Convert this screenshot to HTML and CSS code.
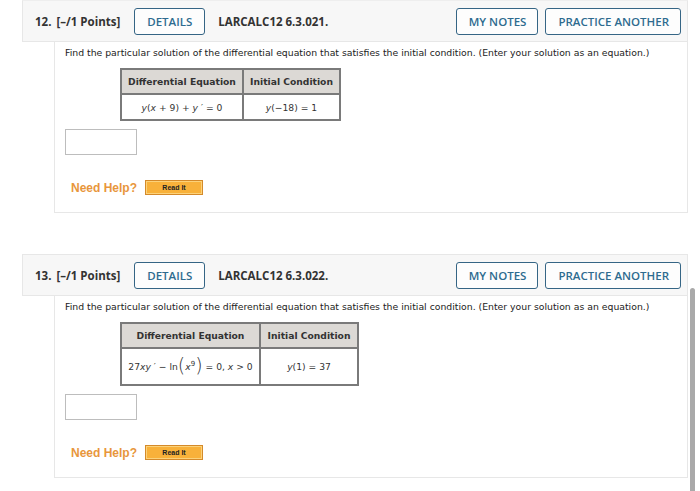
FILE: index.html
```html
<!DOCTYPE html>
<html>
<head>
<meta charset="utf-8">
<link rel="stylesheet" href="styles.css">
</head>
<body>
<div class="page">
  <section class="card card-first">
    <header class="card-head">
      <span class="qnum">12.</span>
      <span class="points">[–/1 Points]</span>
      <span class="btn">DETAILS</span>
      <span class="code">LARCALC12 6.3.021.</span>
      <span class="spacer"></span>
      <span class="btn">MY NOTES</span>
      <span class="btn">PRACTICE ANOTHER</span>
    </header>
    <div class="card-body body-one">
      <p class="prompt">Find the particular solution of the differential equation that satisfies the initial condition. (Enter your solution as an equation.)</p>
      <table class="eq-table t1">
        <tr><th class="c1">Differential Equation</th><th>Initial Condition</th></tr>
        <tr><td class="c1"><i>y</i>(<i>x</i> + 9) + <i>y</i> ′ = 0</td><td><i>y</i>(−18) = 1</td></tr>
      </table>
      <div class="answer"></div>
      <div class="help"><span class="need">Need Help?</span><span class="readit">Read It</span></div>
    </div>
  </section>

  <section class="card card-second">
    <header class="card-head">
      <span class="qnum">13.</span>
      <span class="points">[–/1 Points]</span>
      <span class="btn">DETAILS</span>
      <span class="code">LARCALC12 6.3.022.</span>
      <span class="spacer"></span>
      <span class="btn">MY NOTES</span>
      <span class="btn">PRACTICE ANOTHER</span>
    </header>
    <div class="card-body body-two">
      <p class="prompt">Find the particular solution of the differential equation that satisfies the initial condition. (Enter your solution as an equation.)</p>
      <table class="eq-table t2">
        <tr><th class="c1">Differential Equation</th><th>Initial Condition</th></tr>
        <tr><td class="c1">27<i>xy</i> ′ − ln<span class="paren">(</span><i>x</i><sup>9</sup><span class="paren">)</span> = 0, <i>x</i> &gt; 0</td><td><i>y</i>(1) = 37</td></tr>
      </table>
      <div class="answer"></div>
      <div class="help"><span class="need">Need Help?</span><span class="readit">Read It</span></div>
    </div>
  </section>
</div>
<div class="scrollthumb"></div>
</body>
</html>
```

FILE: styles.css
```css
html, body {
  margin: 0;
  padding: 0;
  background: #ffffff;
}
body {
  width: 700px;
  height: 491px;
  overflow: hidden;
  position: relative;
}
.page {
  padding-left: 22px;
  width: 666px;
}
.card-second { margin-top: 41px; }

.card-head {
  box-sizing: border-box;
  height: 42px;
  background: #f7f7f7;
  border: 1px solid #e7e7e7;
  display: flex;
  align-items: center;
  padding-left: 12px;
  padding-right: 6px;
  font-family: "Open Sans", sans-serif;
  font-weight: 700;
  font-size: 11.5px;
  color: #333;
}
.card-first .card-head { border-top-color: #eeeeee; }
.qnum { margin-right: 5px; }
.points { margin-right: 14px; }
.code { margin-left: 13px; font-weight: 700; }
.spacer { flex: 1; }
.btn {
  box-sizing: border-box;
  height: 27px;
  display: inline-flex;
  align-items: center;
  padding: 0 11px 0 12px;
  border: 1.5px solid #356585;
  border-radius: 3px;
  background: #fdfdfd;
  color: #2e6b8f;
  font-weight: 600;
  font-size: 11.5px;
  margin-left: 7px;
}
.points + .btn { margin-left: 0; padding: 0 12px; }
.card-body {
  box-sizing: border-box;
  margin-left: 32px;
  border: 1px solid #e7e7e7;
  border-top: none;
  padding-left: 10px;
  padding-top: 4px;
}
.body-one { height: 171px; }
.body-two { height: 182px; }
.prompt {
  margin: 0;
  font-family: "DejaVu Sans", sans-serif;
  font-size: 9.3px;
  color: #222;
  line-height: 13px;
}
.eq-table {
  border-collapse: collapse;
  margin-left: 55px;
  margin-top: 9px;
  font-family: "DejaVu Sans", sans-serif;
  font-size: 9.2px;
  color: #333;
}
.eq-table th, .eq-table td {
  border: 2px solid #7a7a7a;
  text-align: center;
}
.eq-table th {
  background: #dcd9d5;
  font-weight: 700;
  height: 23px;
  padding: 0 4px;
}
.eq-table td {
  height: 24px;
  padding: 0 4px;
}
.t1 .c1 { width: 112px; }
.t1 th:last-child, .t1 td:last-child { width: 87px; }
.t2 td { height: 35px; }
.t2 th:last-child, .t2 td:last-child { width: 88px; }
.t2 .c1 { width: 129px; }
.paren { font-size: 19px; line-height: 0; vertical-align: -2px; font-weight: 300; }
sup { font-size: 7px; vertical-align: 4px; line-height: 0; }
.answer {
  box-sizing: border-box;
  width: 72px;
  height: 26px;
  border: 1px solid #bdbdbd;
  margin-top: 8px;
  background: #fff;
}
.help {
  display: flex;
  align-items: center;
  margin-top: 25px;
  margin-left: 6px;
}
.need {
  font-family: "Liberation Sans", Arial, sans-serif;
  font-weight: 700;
  font-size: 12px;
  color: #e8963c;
  margin-right: 8px;
}
.readit {
  box-sizing: border-box;
  width: 58px;
  height: 15px;
  background: #f8b13a;
  border: 1px solid #d48a2a;
  box-shadow: inset 0 0 0 1px #fcd27a;
  font-family: "Liberation Sans", Arial, sans-serif;
  font-weight: 700;
  font-size: 7px;
  color: #222;
  display: flex;
  align-items: center;
  justify-content: center;
}
.scrollthumb {
  position: absolute;
  left: 690px;
  top: 288px;
  width: 5px;
  height: 210px;
  background: #a9a9a9;
  border-radius: 3px;
}
```
